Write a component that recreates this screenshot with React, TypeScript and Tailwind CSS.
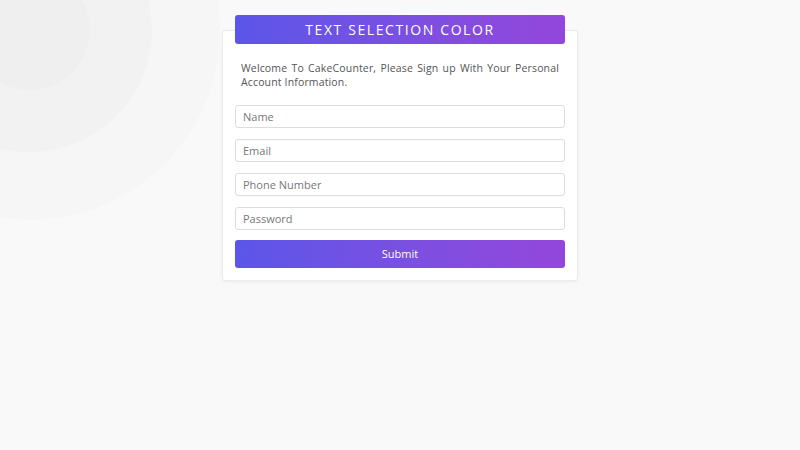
const FIELDS = [
  { type: "text", placeholder: "Name" },
  { type: "email", placeholder: "Email" },
  { type: "tel", placeholder: "Phone Number" },
  { type: "password", placeholder: "Password" },
];

export default function App() {
  return (
    <div
      className="relative min-h-[450px] w-full overflow-hidden bg-[#f9f9f9] pt-[30px]"
      style={{ fontFamily: '"Open Sans", "Noto Sans", sans-serif' }}
    >
      {/* background rings */}
      <div className="pointer-events-none absolute left-[-160px] top-[-160px] h-[380px] w-[380px] rounded-full bg-[#f6f6f6]" />
      <div className="pointer-events-none absolute left-[-92px] top-[-92px] h-[244px] w-[244px] rounded-full bg-[#f2f2f2]" />
      <div className="pointer-events-none absolute left-[-30px] top-[-30px] h-[120px] w-[120px] rounded-full bg-[#efefef]" />

      <div className="relative mx-auto w-[356px] rounded-[3px] border border-[#ececec] bg-white px-[12px] pb-[12px] shadow-[0_1px_4px_rgba(0,0,0,0.06)]">
        <h1 className="-mt-[16px] flex h-[29px] items-center justify-center rounded-[3px] bg-gradient-to-r from-[#5a56e9] to-[#9446db] text-[14px] uppercase tracking-[1.6px] text-white">
          Text Selection Color
        </h1>

        <p className="mt-[17px] px-[6px] text-justify text-[10.5px] leading-[14px] tracking-[0.15px] text-[#555]">
          Welcome To CakeCounter, Please Sign up With Your Personal Account Information.
        </p>

        <form className="mt-[16px] flex flex-col gap-[11px]" onSubmit={(e) => e.preventDefault()}>
          {FIELDS.map((field) => (
            <input
              key={field.placeholder}
              type={field.type}
              placeholder={field.placeholder}
              className="h-[23px] w-full rounded-[3px] border border-[#dcdcdc] bg-white px-[7px] text-[11px] text-[#444] placeholder:text-[#777] focus:outline-none"
            />
          ))}
          <button
            type="submit"
            className="-mt-px h-[28px] w-full rounded-[3px] bg-gradient-to-r from-[#5a56e9] to-[#9446db] text-[11px] text-white"
          >
            Submit
          </button>
        </form>
      </div>
    </div>
  );
}
